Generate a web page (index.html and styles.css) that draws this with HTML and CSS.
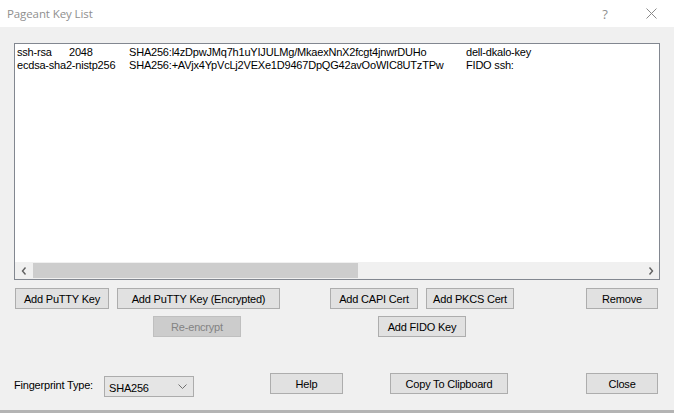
FILE: index.html
```html
<!DOCTYPE html>
<html>
	<head>
		<meta charset="utf-8">
		<title>Pageant Key List</title>
		<link rel="stylesheet" href="styles.css">
	</head>
	<body>
		<div class="window">
			<div class="titlebar">
				<span class="title">Pageant Key List</span>
				<span class="title-help">?</span>
				<span class="title-close">
					<svg width="11" height="11" viewBox="0 0 11 11"><path d="M0.5 0.5 L10.5 10.5 M10.5 0.5 L0.5 10.5" stroke="#8a8a8a" stroke-width="1" fill="none"/></svg>
				</span>
			</div>
			<div class="content">
				<div class="key-list">
					<div class="key-rows">
						<div class="key-row">
							<span class="col-type">ssh-rsa</span><span class="col-bits">2048</span><span class="col-fp">SHA256:l4zDpwJMq7h1uYIJULMg/MkaexNnX2fcgt4jnwrDUHo</span><span class="col-comment">dell-dkalo-key</span>
						</div>
						<div class="key-row">
							<span class="col-type wide">ecdsa-sha2-nistp256</span><span class="col-fp">SHA256:+AVjx4YpVcLj2VEXe1D9467DpQG42avOoWIC8UTzTPw</span><span class="col-comment">FIDO ssh:</span>
						</div>
					</div>
					<div class="hscroll">
						<div class="arrow">
							<svg width="6" height="8" viewBox="0 0 6 8"><path d="M4.5 0.5 L1.5 4 L4.5 7.5" stroke="#606060" stroke-width="1.4" fill="none"/></svg>
						</div>
						<div class="track"><div class="thumb"></div></div>
						<div class="arrow">
							<svg width="6" height="8" viewBox="0 0 6 8"><path d="M1.5 0.5 L4.5 4 L1.5 7.5" stroke="#606060" stroke-width="1.4" fill="none"/></svg>
						</div>
					</div>
				</div>

				<div class="btn-row row-one">
					<button class="btn b-putty">Add PuTTY Key</button>
					<button class="btn b-enc">Add PuTTY Key (Encrypted)</button>
					<button class="btn b-capi">Add CAPI Cert</button>
					<button class="btn b-pkcs">Add PKCS Cert</button>
					<button class="btn b-remove">Remove</button>
				</div>
				<div class="btn-row row-two">
					<button class="btn b-reenc" disabled>Re-encrypt</button>
					<button class="btn b-fido">Add FIDO Key</button>
				</div>
				<div class="btn-row row-three">
					<label class="fp-label">Fingerprint Type:</label>
					<div class="select">
						<span>SHA256</span>
						<svg width="9" height="6" viewBox="0 0 9 6"><path d="M0.5 0.5 L4.5 4.5 L8.5 0.5" stroke="#707070" stroke-width="1" fill="none"/></svg>
					</div>
					<button class="btn b-help">Help</button>
					<button class="btn b-copy">Copy To Clipboard</button>
					<button class="btn b-close">Close</button>
				</div>
			</div>
			<div class="bottom-edge"></div>
		</div>
	</body>
</html>
```

FILE: styles.css
```css
* {
	box-sizing: border-box;
}
body {
	margin: 0;
	background-color: #f0f0f0;
	font-family: "Liberation Sans", Arial, sans-serif;
	font-size: 11px;
	letter-spacing: -0.2px;
	color: #000;
}
.window {
	width: 674px;
	height: 413px;
	overflow: hidden;
	display: flex;
	flex-direction: column;
}
.titlebar {
	height: 27px;
	background-color: #fff;
	display: flex;
	align-items: center;
	font-family: "Open Sans", "Noto Sans", sans-serif;
	font-size: 11.5px;
	letter-spacing: -0.1px;
	color: #8f8f8f;
}
.title {
	margin-left: 7px;
	flex: 1;
}
.title-help {
	width: 46px;
	text-align: center;
	font-size: 13px;
	margin-top: 1px;
}
.title-close {
	width: 46px;
	display: flex;
	justify-content: center;
}
.content {
	flex: 1;
	padding-top: 16px;
}
.key-list {
	margin-left: 14px;
	width: 646px;
	height: 237px;
	border: 1px solid #828790;
	background-color: #fff;
	display: flex;
	flex-direction: column;
}
.key-rows {
	flex: 1;
	padding-top: 2px;
	padding-left: 2px;
	white-space: nowrap;
	overflow: hidden;
}
.key-row {
	height: 13px;
	line-height: 13px;
	display: flex;
}
.col-type {
	width: 52px;
}
.col-type.wide {
	width: 112px;
}
.col-bits {
	width: 60px;
}
.col-fp {
	width: 337px;
}
.hscroll {
	height: 17px;
	display: flex;
	background-color: #f0f0f0;
}
.arrow {
	width: 17px;
	display: flex;
	align-items: center;
	justify-content: center;
}
.track {
	flex: 1;
	padding: 1px 0;
}
.thumb {
	width: 325px;
	height: 15px;
	margin-left: 1px;
	background-color: #cdcdcd;
}
.btn-row {
	display: flex;
	align-items: flex-start;
}
.row-one {
	margin-top: 8px;
}
.row-two {
	margin-top: 7px;
}
.row-three {
	margin-top: 36px;
}
.btn {
	height: 21px;
	padding: 0;
	border: 1px solid #adadad;
	background-color: #e1e1e1;
	font-family: "Liberation Sans", Arial, sans-serif;
	font-size: 11px;
	letter-spacing: -0.2px;
	color: #000;
}
.btn:disabled {
	background-color: #cccccc;
	border-color: #bfbfbf;
	color: #838383;
}
.b-putty {
	margin-left: 15px;
	width: 94px;
}
.b-enc {
	margin-left: 8px;
	width: 163px;
}
.b-capi {
	margin-left: 50px;
	width: 88px;
}
.b-pkcs {
	margin-left: 8px;
	width: 88px;
}
.b-remove {
	margin-left: 72px;
	width: 72px;
}
.b-reenc {
	margin-left: 153px;
	width: 88px;
}
.b-fido {
	margin-left: 137px;
	width: 88px;
}
.fp-label {
	margin-left: 14px;
	width: 90px;
	line-height: 24px;
}
.select {
	margin-top: 3px;
	width: 90px;
	height: 21px;
	border: 1px solid #acacac;
	background-color: #e5e5e5;
	display: flex;
	align-items: center;
	justify-content: space-between;
	padding: 2px 6px 0 4px;
}
.select svg {
	margin-top: -2px;
}
.b-help {
	margin-left: 76px;
	width: 73px;
}
.b-copy {
	margin-left: 47px;
	width: 118px;
}
.b-close {
	margin-left: 78px;
	width: 72px;
}
.bottom-edge {
	height: 3px;
	background-color: #b4b4b4;
}
```
